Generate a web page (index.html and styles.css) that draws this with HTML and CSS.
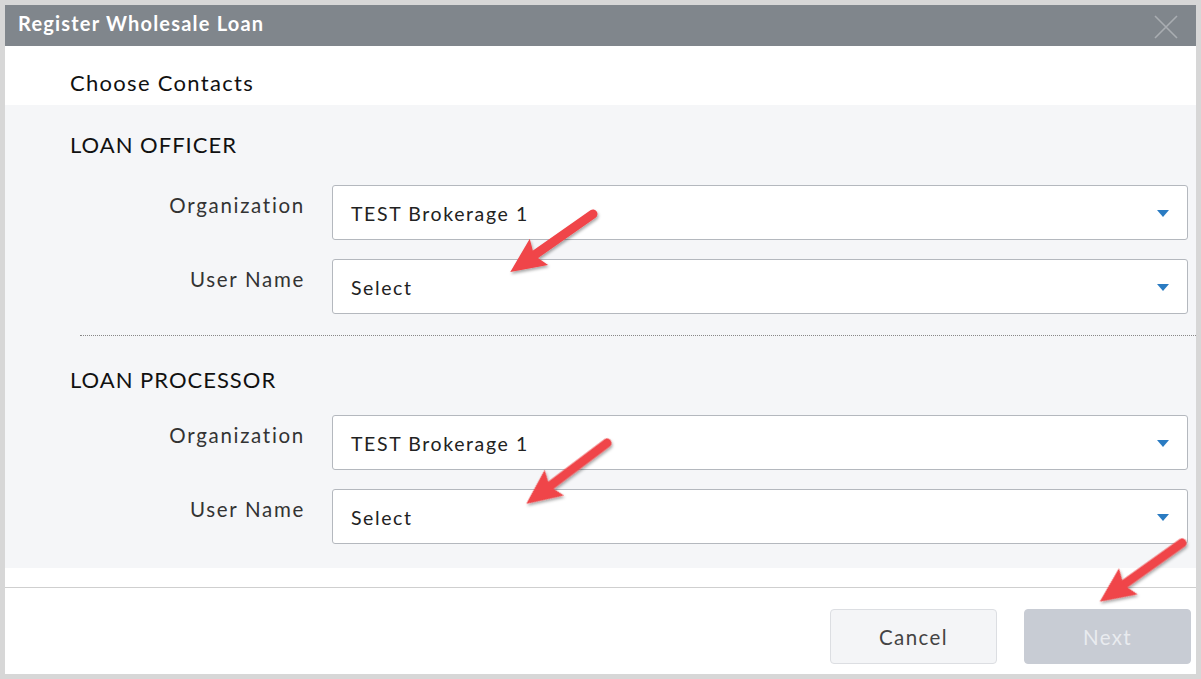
FILE: index.html
```html
<!DOCTYPE html>
<html lang="en">
<head>
  <meta charset="UTF-8" />
  <meta name="viewport" content="width=device-width, initial-scale=1.0" />
  <title>Register Wholesale Loan</title>
  <link rel="stylesheet" href="styles.css">
</head>
<body>
  <div class="dialog">
    <div class="dialog-header">
      <div class="dialog-title">Register Wholesale Loan</div>
      <button class="close-btn" aria-label="Close">
        <svg width="24" height="24" viewBox="0 0 24 24">
          <path d="M1 1 L23 23 M23 1 L1 23" stroke="#a9adb2" stroke-width="1.6" fill="none" />
        </svg>
      </button>
    </div>

    <div class="step-title">Choose Contacts</div>

    <div class="contacts-panel">
      <div class="section-title">LOAN OFFICER</div>
      <div class="form-grid">
        <label class="form-label">Organization</label>
        <div class="select-box">
          <span>TEST Brokerage 1</span>
          <span class="caret"></span>
        </div>
        <label class="form-label">User Name</label>
        <div class="select-box">
          <span>Select</span>
          <span class="caret"></span>
        </div>
      </div>

      <div class="divider"></div>

      <div class="section-title section-title-tight">LOAN PROCESSOR</div>
      <div class="form-grid">
        <label class="form-label">Organization</label>
        <div class="select-box">
          <span>TEST Brokerage 1</span>
          <span class="caret"></span>
        </div>
        <label class="form-label">User Name</label>
        <div class="select-box">
          <span>Select</span>
          <span class="caret"></span>
        </div>
      </div>
    </div>

    <div class="dialog-footer">
      <button class="btn btn-cancel">Cancel</button>
      <button class="btn btn-next" disabled>Next</button>
    </div>
  </div>

  <!-- callout arrows drawn over the form -->
  <svg class="callouts" width="1201" height="679" viewBox="0 0 1201 679">
    <defs>
      <filter id="arrow-shadow" x="-20%" y="-20%" width="140%" height="140%">
        <feDropShadow dx="1" dy="2" stdDeviation="1.5" flood-color="#000" flood-opacity="0.35" />
      </filter>
      <g id="arrow">
        <line x1="0" y1="0" x2="74" y2="0" stroke="#f04548" stroke-width="9" stroke-linecap="round" />
        <polygon points="101,0 66,-16 72,0 66,16" fill="#f04548" />
      </g>
    </defs>
    <g filter="url(#arrow-shadow)">
      <use href="#arrow" transform="translate(593 214) rotate(145)" />
      <use href="#arrow" transform="translate(607 443) rotate(143)" />
      <use href="#arrow" transform="translate(1182 543) rotate(144.5)" />
    </g>
  </svg>
</body>
</html>
```

FILE: styles.css
```css
body {
  margin: 0;
  background-color: #d7d7d7;
  font-family: 'Lato', 'Open Sans', sans-serif;
  color: #222;
  width: 1201px;
  height: 679px;
  overflow: hidden;
  position: relative;
}

.dialog {
  margin: 5px;
  background: #fff;
  height: 669px;
  display: flex;
  flex-direction: column;
}

.dialog-header {
  height: 41px;
  background-color: #80868c;
  display: flex;
  align-items: center;
  justify-content: space-between;
  padding: 0 18px 0 13px;
}

.dialog-title {
  color: #fff;
  font-size: 20px;
  font-weight: 700;
  letter-spacing: 1.2px;
  margin-top: -6px;
}

.close-btn {
  background: none;
  border: none;
  padding: 0;
  width: 24px;
  height: 24px;
  margin-top: 2px;
  cursor: pointer;
}

.step-title {
  height: 59px;
  box-sizing: border-box;
  padding: 23px 0 0 65px;
  font-size: 22px;
  letter-spacing: 1.3px;
  color: #111;
}

.contacts-panel {
  background-color: #f5f6f8;
  padding: 25px 8px 24px 0;
}

.section-title {
  padding-left: 65px;
  font-size: 22px;
  line-height: 30px;
  letter-spacing: 1px;
  color: #111;
  margin-bottom: 25px;
}

.section-title-tight {
  margin-bottom: 20px;
}

.form-grid {
  display: grid;
  grid-template-columns: 300px 1fr;
  column-gap: 27px;
  row-gap: 19px;
}

.form-label {
  text-align: right;
  font-size: 20.5px;
  letter-spacing: 1.7px;
  color: #333;
  padding-top: 8px;
}

.select-box {
  height: 55px;
  box-sizing: border-box;
  background: #fff;
  border: 1px solid #b4b8be;
  border-radius: 3px;
  display: flex;
  align-items: center;
  justify-content: space-between;
  padding: 2px 18px 0 18px;
  font-size: 19.5px;
  letter-spacing: 1.6px;
  color: #222;
}

.caret {
  width: 0;
  height: 0;
  border-left: 6px solid transparent;
  border-right: 6px solid transparent;
  border-top: 7px solid #2a7bc2;
}

.divider {
  margin: 21px -8px 29px 75px;
  border-top: 1px dotted #888;
}

.dialog-footer {
  margin-top: 19px;
  border-top: 1px solid #cfcfcf;
  flex: 1;
  display: flex;
  justify-content: flex-end;
  align-items: flex-start;
  gap: 27px;
  padding: 21px 5px 0 0;
}

.btn {
  width: 167px;
  height: 55px;
  border-radius: 4px;
  font-family: inherit;
  font-size: 20.5px;
  letter-spacing: 1.4px;
  cursor: pointer;
}

.btn-cancel {
  background: #f4f5f7;
  border: 1px solid #dcdee2;
  color: #444;
}

.btn-next {
  background: #c8ccd4;
  border: 1px solid #c8ccd4;
  color: #e9ebef;
  cursor: default;
}

.callouts {
  position: absolute;
  top: 0;
  left: 0;
  pointer-events: none;
}
```
